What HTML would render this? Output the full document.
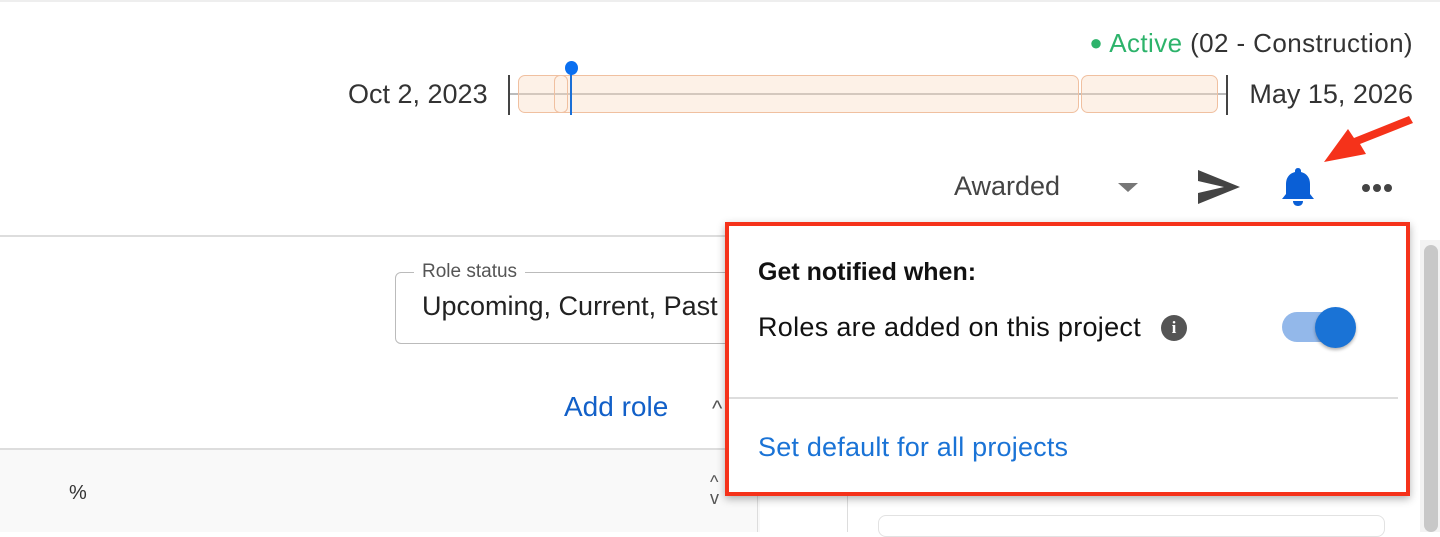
<!DOCTYPE html>
<html><head><style>
body{margin:0;width:1440px;height:532px;position:relative;overflow:hidden;background:#fff;font-family:"Liberation Sans",Arial,sans-serif;}
.a{position:absolute;white-space:nowrap}
</style></head><body>
<div class="a" style="left:0;top:0;width:1440px;height:2px;background:#eee"></div>
<div class="a" style="right:27px;top:28px;font-size:26px;letter-spacing:0.4px;color:#333"><span style="color:#2db36b;font-size:22px;vertical-align:2px">●</span> <span style="color:#2db36b">Active</span> (02 - Construction)</div>
<div class="a" style="left:348px;top:79px;font-size:27px;color:#333">Oct 2, 2023</div>
<div class="a" style="right:27px;top:79px;font-size:27px;color:#333">May 15, 2026</div>
<div class="a" style="left:508px;top:75px;width:2px;height:40px;background:#444"></div>
<div class="a" style="left:1226px;top:75px;width:2px;height:40px;background:#444"></div>
<div class="a" style="left:510px;top:93px;width:716px;height:2px;background:#bbb"></div>
<div class="a" style="left:518px;top:75px;width:559px;height:36px;border:1.5px solid #f0c0a0;background:rgba(250,220,195,.4);border-radius:7px"></div>
<div class="a" style="left:1081px;top:75px;width:135px;height:36px;border:1.5px solid #f0c0a0;background:rgba(250,220,195,.4);border-radius:7px"></div>
<div class="a" style="left:554px;top:75px;width:12px;height:36px;border:1.5px solid #f0c0a0;border-radius:6px"></div>
<div class="a" style="left:570px;top:70px;width:2px;height:45px;background:#1a6fd6"></div>
<div class="a" style="left:565px;top:61px;width:13px;height:14px;border-radius:50%;background:#0a6ff0"></div>
<div class="a" style="left:954px;top:171px;font-size:27px;color:#444">Awarded</div>
<div class="a" style="left:1118px;top:183px;width:0;height:0;border-left:10px solid transparent;border-right:10px solid transparent;border-top:9px solid #777"></div>
<svg class="a" style="left:1196px;top:168px" width="45" height="38" viewBox="0 0 45 38"><path d="M2 2 L44 19 L2 36 L2 25 L28 19 L2 13 Z" fill="#444"/></svg>
<svg class="a" style="left:1280px;top:166px" width="36" height="42" viewBox="0 0 36 42"><path d="M18 2c-2 0-3 1.5-3 3v1C9 7.5 6 12 6 18v10l-4 5h32l-4-5V18c0-6-3-10.5-9-12V5c0-1.5-1-3-3-3z" fill="#0a5fd6"/><path d="M13 35h10c0 3-2 5-5 5s-5-2-5-5z" fill="#0a5fd6"/></svg>
<div class="a" style="left:1362px;top:184px;width:8px;height:8px;border-radius:50%;background:#444;box-shadow:11px 0 #444,22px 0 #444"></div>
<svg class="a" style="left:1318px;top:112px" width="100" height="55" viewBox="0 0 100 55"><path d="M91 4 L95 11 L42 32 L48 42 L6 50 L30 17 L36 26 Z" fill="#f5321a"/></svg>
<div class="a" style="left:0;top:235px;width:740px;height:2px;background:#ddd"></div>
<div class="a" style="left:395px;top:272px;width:360px;height:70px;border:1.5px solid #bbb;border-radius:6px"></div>
<div class="a" style="left:414px;top:261px;padding:0 8px;background:#fff;font-size:19px;color:#555">Role status</div>
<div class="a" style="left:422px;top:291px;font-size:27px;color:#222">Upcoming, Current, Past</div>
<div class="a" style="left:564px;top:391px;font-size:28px;color:#1260c8">Add role</div>
<div class="a" style="left:712px;top:396px;font-size:22px;color:#555">^</div>
<div class="a" style="left:0;top:448px;width:760px;height:2px;background:#ddd"></div>
<div class="a" style="left:0;top:450px;width:760px;height:82px;background:#f9f9f9"></div>
<div class="a" style="left:69px;top:482px;font-size:20px;color:#333">%</div>
<div class="a" style="left:710px;top:474px;font-size:18px;color:#555;line-height:16px">^<br>v</div>
<div class="a" style="left:757px;top:450px;width:1px;height:82px;background:#ddd"></div>
<div class="a" style="left:847px;top:450px;width:1px;height:82px;background:#ddd"></div>
<div class="a" style="left:878px;top:515px;width:505px;height:20px;border:1px solid #e2e2e2;border-radius:8px"></div>
<div class="a" style="left:1420px;top:240px;width:20px;height:292px;background:#f3f3f3"></div>
<div class="a" style="left:1424px;top:245px;width:14px;height:287px;background:#c8c8c8;border-radius:7px"></div>
<div class="a" style="left:725px;top:222px;width:677px;height:266px;border:4px solid #f5321a;background:#fff;box-shadow:0 3px 8px rgba(0,0,0,.3)"></div>
<div class="a" style="left:758px;top:258px;font-size:25px;font-weight:bold;color:#111">Get notified when:</div>
<div class="a" style="left:758px;top:312px;font-size:27px;letter-spacing:0.3px;color:#111">Roles are added on this project</div>
<div class="a" style="left:1161px;top:315px;width:26px;height:26px;border-radius:50%;background:#555;color:#fff;font-size:17px;font-weight:bold;text-align:center;line-height:26px;font-family:'Liberation Serif',serif">i</div>
<div class="a" style="left:1282px;top:312px;width:56px;height:30px;border-radius:15px;background:#93b8ea"></div>
<div class="a" style="left:1315px;top:307px;width:41px;height:41px;border-radius:50%;background:#1a73d6;box-shadow:0 2px 3px rgba(0,0,0,.3)"></div>
<div class="a" style="left:729px;top:397px;width:669px;height:2px;background:#ddd"></div>
<div class="a" style="left:758px;top:432px;font-size:27px;letter-spacing:0.2px;color:#1a73d6">Set default for all projects</div>
</body></html>
